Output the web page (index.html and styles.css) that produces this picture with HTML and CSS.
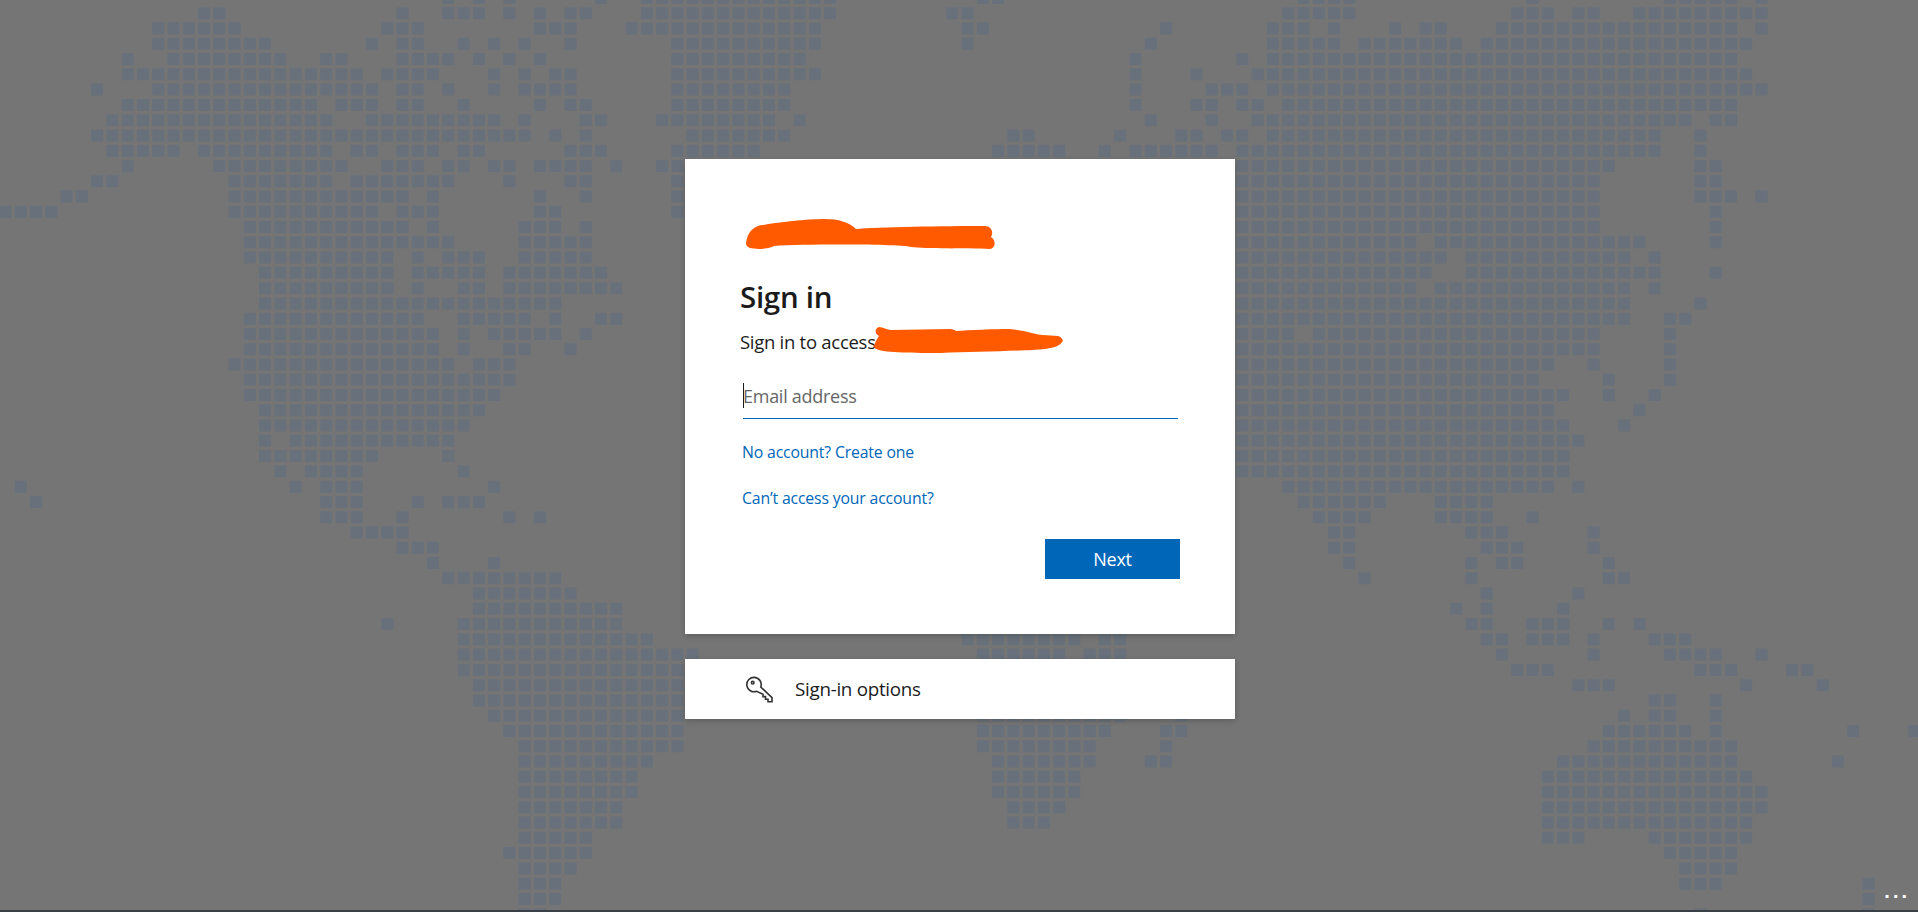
FILE: index.html
```html
<!DOCTYPE html>
<html lang="en">
<head>
    <meta charset="UTF-8">
    <meta name="viewport" content="width=device-width, initial-scale=1.0">
    <title>Sign in</title>
    <link rel="stylesheet" href="styles.css">
</head>
<body>

<svg id="world-map" class="world-map" width="1918" height="912" aria-hidden="true"></svg>

<main class="login">
    <section class="card">
        <svg class="scribble scribble-logo" width="249" height="30" viewBox="0 0 249 30" aria-hidden="true">
            <path d="M0 24C1 17 4 10 12 7 25 4 60 0 79 0 92 0 103 3 110 10 130 8 200 7 239 7 245 7 248 13 245 18 250 21 250 29 244 30 220 29 180 30 165 28 150 25 60 25 28 27 20 31 8 30 4 29 1 28 0 26 0 24Z"/>
        </svg>
        <h1 class="title">Sign in</h1>
        <p class="subtitle">Sign in to access
            <svg class="scribble scribble-app" width="189" height="26" viewBox="0 0 189 26" aria-hidden="true">
                <path d="M0 19C1 15 3 12 5 9 1 7 0 2 5 0 9 0 13 3 17 3L76 2C79 2 81 3 82 4 95 3 120 2 136 2 150 3 160 7 169 8L184 9C188 10 190 14 188 15 186 19 178 21 171 22 150 24 100 25 67 26 50 26 15 26 5 23 2 22 0 21 0 19Z"/>
            </svg>
        </p>
        <div class="email">
            <span class="caret"></span>
            <input class="email-input" type="text" placeholder="Email address">
        </div>
        <a class="link link-create" href="#">No account? Create one</a>
        <a class="link link-access" href="#">Can’t access your account?</a>
        <div class="actions">
            <button class="next" type="button">Next</button>
        </div>
    </section>

    <section class="card-options">
        <svg class="key" width="28" height="27" viewBox="0 0 28 27" aria-hidden="true">
            <path d="M10.600 15.300A7.200 7.200 0 1 1 14.800 11L26 21.600V25.800H22V23.200H19.500V20.600H17V18.200Z"/>
            <circle cx="6.700" cy="6.700" r="1.300"/>
        </svg>
        <span class="options-label">Sign-in options</span>
    </section>
</main>

<div class="more">...</div>
<div class="bottom-line"></div>

<script src="map.js"></script>
</body>
</html>
```

FILE: styles.css
```css
html, body {
    height: 100%;
}
body {
    font-family: 'Open Sans', 'Noto Sans', sans-serif;
    background-color: #757575;
    margin: 0;
    padding: 0;
    overflow: hidden;
    color: #1b1b1b;
}
.world-map {
    position: absolute;
    top: 0;
    left: 0;
    filter: blur(0.6px);
}
.world-map rect {
    fill: #68717b;
}
.login {
    position: relative;
    display: flex;
    flex-direction: column;
    align-items: center;
    padding: 159px 0 0 2px;
}
.card, .card-options {
    width: 550px;
    box-sizing: border-box;
    background-color: #ffffff;
    box-shadow: 0 2px 6px rgba(0,0,0,0.2);
}
.card {
    height: 475px;
    padding: 60px 55px 0;
}
.scribble {
    display: block;
    overflow: visible;
}
.scribble path {
    fill: #ff5a00;
}
.scribble-logo {
    margin-left: 6px;
}
.scribble-app {
    position: absolute;
    left: 134px;
    top: -2px;
}
.title {
    margin: 29px 0 0;
    font-size: 29.500px;
    line-height: 38px;
    font-weight: 600;
    letter-spacing: -0.01em;
}
.subtitle {
    position: relative;
    margin: 13px 0 0;
    font-size: 18.500px;
    line-height: 25px;
    letter-spacing: -0.015em;
}
.email {
    position: relative;
    margin: 22px 0 0 3px;
    width: 435px;
    border-bottom: 1px solid #0067b8;
}
.caret {
    position: absolute;
    left: 0;
    top: 7px;
    width: 1px;
    height: 25px;
    background-color: #1b1b1b;
}
.email-input {
    display: block;
    width: 100%;
    height: 42px;
    box-sizing: border-box;
    padding: 0 0 2px;
    border: 0;
    outline: 0;
    background: transparent;
    font-family: inherit;
    font-size: 18px;
    letter-spacing: -0.015em;
}
.email-input::placeholder {
    color: #666666;
    opacity: 1;
}
.link {
    display: block;
    margin-left: 2px;
    font-size: 15.800px;
    line-height: 22px;
    letter-spacing: -0.01em;
    color: #0067b8;
    text-decoration: none;
}
.link-create {
    margin-top: 22px;
}
.link-access {
    margin-top: 24px;
}
.actions {
    display: flex;
    justify-content: flex-end;
    margin: 30px 0 0;
}
.next {
    width: 135px;
    height: 40px;
    border: 0;
    padding: 0;
    background-color: #0067b8;
    color: #ffffff;
    font-family: inherit;
    font-size: 18px;
    letter-spacing: -0.015em;
}
.card-options {
    display: flex;
    align-items: center;
    height: 60px;
    margin-top: 25px;
    padding-left: 61px;
}
.key {
    flex: none;
    overflow: visible;
}
.key path, .key circle {
    fill: none;
    stroke: #333333;
    stroke-width: 1.600;
    stroke-linejoin: miter;
}
.options-label {
    margin-left: 21px;
    font-size: 18.800px;
    letter-spacing: -0.015em;
}
.more {
    position: absolute;
    right: 8px;
    bottom: 11px;
    font-family: 'Liberation Sans', sans-serif;
    font-size: 20px;
    font-weight: bold;
    line-height: 20px;
    letter-spacing: 3px;
    color: #ffffff;
}
.bottom-line {
    position: absolute;
    left: 0;
    right: 0;
    bottom: 0;
    height: 2px;
    background-color: #3b4046;
}
```

FILE: map.js
```js
// land cells of the background map: one string per row, columns or column ranges
const MAP_ROWS = [
    "29 31 33 39 42-54 64 65 85-88 100 109-113 115",
    "13 14 26 29-31 33 35 37 38 42-54 62 63 84-88 99-101 103 104 107-115",
    "10-15 25-27 35-37 41-53 63 64 76 83-85 87 91 93 94 98-113 115",
    "10-17 24 26 27 30 32 34 37 44-53 63 75 83-87 89-95 97-114",
    "8 11-18 21 22 26-29 31 33 35 44-52 74 81 83-113",
    "8-23 25-28 32 34 36 37 44-53 74 78 82-114",
    "6 10-24 26 27 29 32 34-37 44-51 74 79-81 83-115",
    "8-20 22-24 26 27 30 35 37 38 44-51 74 78 79 81 82 84-113",
    "7-21 24-32 34 38 39 43-50 52 75 79 82-110 112 113",
    "6-34 36 38 45-51 66 67 73 77 78 80 81 83-108 111",
    "7-11 13-21 23 24 26-28 30 31 37-39 44-49 65-69 72 74-79 81-108 111",
    "8 14-22 25-27 29 30 32 33 35-38 40 43 44 81-105 111 112",
    "6 7 15-21 23-29 33 37 38 44 81-104 111 112",
    "4 5 15-26 28 35 38 44 81-104 111-113 115",
    "0-3 15-24 26-28 35 36 44 81-104 112",
    "16-26 28 34-36 38 81-104 112",
    "16-29 34-38 81-92 94-107 112",
    "16-25 27 29-31 34-38 81-94 96-106 108",
    "17-25 27-31 33-39 81-93 96-108 112",
    "17-25 27 30 31 33-40 81-92 94-106 108",
    "17-36 81-106 111",
    "16-27 30-34 36 39 40 81-106 109 110",
    "16-28 30 32-36 38 81-84 86-104 109",
    "16-28 30 33 34 37 81-104 109",
    "15-29 31-33 81-101 104 109",
    "16-33 81-100 105 109",
    "16-32 81-102 105 108",
    "17-31 81-101 107",
    "17-30 81-102 106",
    "17 19-29 81-103",
    "17-24 29 81-102",
    "18 20-23 30 81-102",
    "1 19 21-23 32 84-101 103",
    "2 21-23 27 29-31 85-90 94-97",
    "21-23 26 33 35 86-89 94-97 100",
    "23-26 87 88 96-98 104",
    "26-28 87 88 97-99 104",
    "28 32 88 96 98 99 105",
    "29-36 89 96 105 106",
    "31-37 97 103",
    "31-40 95 97 102",
    "25 30-40 96 97 100-102 105 107",
    "30-42 63-70 72 73 97 98 100-102 104 108-110",
    "30-45 64-69 71-73 98 104 109-112 115",
    "30-44 99-101 111-113 117 118",
    "31-44 103-105 114 119",
    "31-44 108 109 112",
    "32-44 64-73 77 106 108 109 112",
    "33-44 64-72 76 77 105-110 112 121 125",
    "34-44 64-71 76 104-113",
    "34-42 65-71 75 76 102-113 120",
    "34-41 65-70 101-114",
    "34-41 65-70 101-115",
    "34-40 66-69 101-115",
    "34-40 66-68 101-114",
    "34-38 101-103 108-114",
    "33-38 109-113",
    "34-37 110-113",
    "34-36 110-112 122",
    "34-36 122",
    "34 35 111 122"
];

const PITCH = 15.27;
const CELL = 12;
const svg = document.getElementById("world-map");

MAP_ROWS.forEach((row, y) => {
    row.split(" ").forEach(part => {
        const [from, to] = part.split("-").map(Number);
        for (let x = from; x <= (to ?? from); x++) {
            const rect = document.createElementNS("http://www.w3.org/2000/svg", "rect");
            rect.setAttribute("x", 5.5 + PITCH * x - CELL / 2);
            rect.setAttribute("y", -2 + PITCH * y - CELL / 2);
            rect.setAttribute("width", CELL);
            rect.setAttribute("height", CELL);
            rect.setAttribute("rx", 1);
            svg.appendChild(rect);
        }
    });
});
```
